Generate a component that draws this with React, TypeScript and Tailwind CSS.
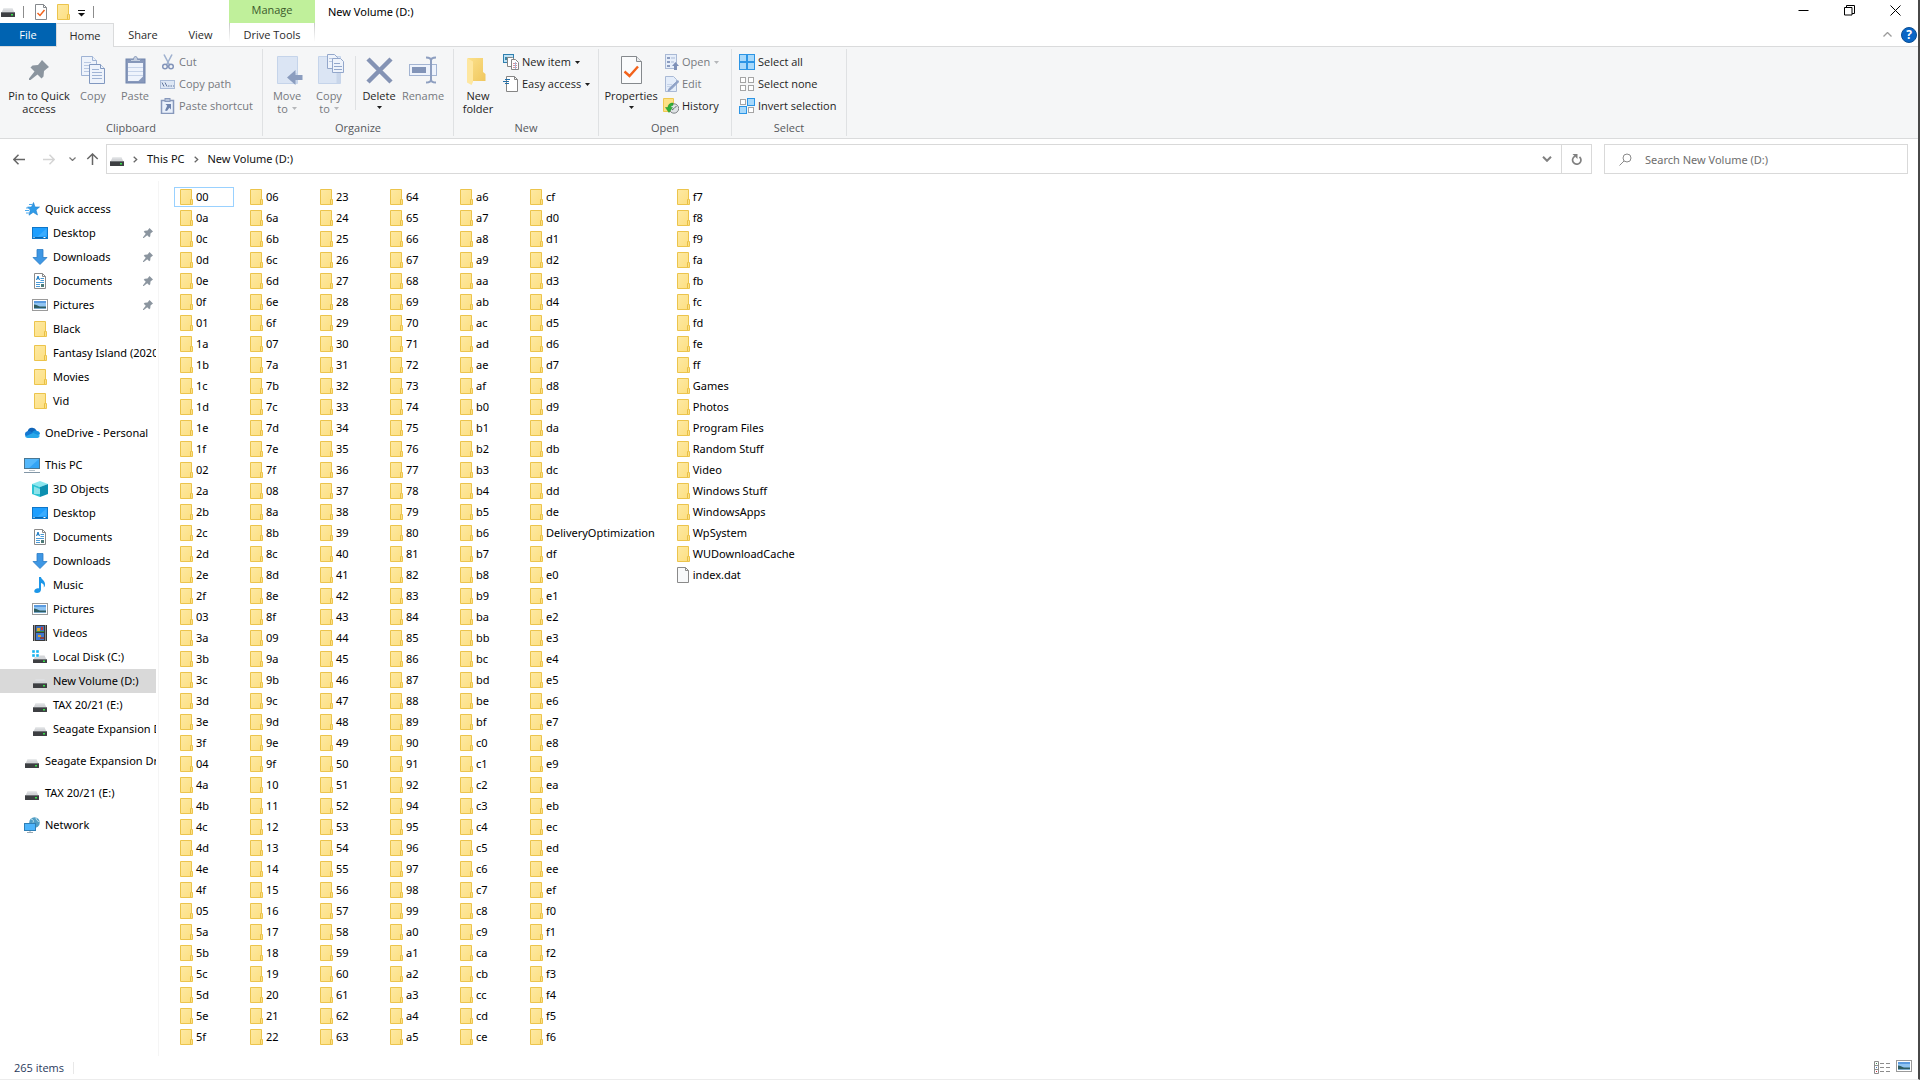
import type { ReactNode } from 'react';

type IconProps = { className?: string };

/* ---------- shared icons ---------- */

function Folder({ className = '' }: IconProps) {
  return (
    <svg className={`h-4 w-[13px] shrink-0 ${className}`} viewBox="0 0 13 16" aria-hidden="true">
      <defs>
        <linearGradient id="folderFill" x1="0" y1="0" x2="1" y2="1">
          <stop offset="0" stopColor="#fde9a3" />
          <stop offset="1" stopColor="#fddf80" />
        </linearGradient>
      </defs>
      <path d="M.5 .5h11v10h1v5H.5z" fill="url(#folderFill)" stroke="#ecc44c" />
      <path d="M10.500 15v-4.500h1" fill="none" stroke="#e8bf45" />
    </svg>
  );
}

function FileIcon() {
  return (
    <svg className="h-4 w-[13px] shrink-0" viewBox="0 0 13 16" aria-hidden="true">
      <path d="M.5 .5h8l3 3v12H.5z" fill="#f8f9fa" stroke="#8a8a8a" />
      <path d="M8.500 .5v3h3" fill="none" stroke="#8a8a8a" />
    </svg>
  );
}

function Drive({ className = '' }: IconProps) {
  return (
    <svg className={`h-4 w-4 shrink-0 ${className}`} viewBox="0 0 16 16" aria-hidden="true">
      <path d="M3.500 6.500h9l2 4h-13z" fill="#d3d5d8" />
      <path d="M3.500 6.500h9l.5 1h-10z" fill="#e6e7e9" />
      <rect x="1" y="10" width="14" height="5" rx=".6" fill="#3d3f42" />
      <rect x="1" y="10" width="14" height="1" fill="#6f7276" />
      <rect x="11" y="12" width="2" height="1.500" fill="#38e04a" />
    </svg>
  );
}

function SystemDrive() {
  return (
    <svg className="h-4 w-4 shrink-0" viewBox="0 0 16 16" aria-hidden="true">
      <path d="M3.500 6.500h9l2 4h-13z" fill="#d3d5d8" />
      <rect x="1" y="10" width="14" height="4" rx=".6" fill="#3d3f42" />
      <rect x="1" y="10" width="14" height="1" fill="#6f7276" />
      <rect x="11" y="11.500" width="2" height="1.500" fill="#38e04a" />
      <rect x="0" y="1" width="7" height="7" fill="#fff" />
      <path d="M0 1h3v3H0zM4 1h3v3H4zM0 5h3v3H0zM4 5h3v3H4z" fill="#18b4f1" stroke="#fff" strokeWidth=".4" />
    </svg>
  );
}

function Pin({ className = '', color = '#8b959f' }: IconProps & { color?: string }) {
  return (
    <svg className={className} viewBox="0 0 20 20" aria-hidden="true">
      <path
        d="M13 0 20 7 18 8.500 15 11 14.500 16.500 12.500 18.500 8.500 14.500 1.500 20 0 20 0 18.500 5.500 11.500 1.500 7.500 3.500 5.500 9 5 11.500 2z"
        fill={color}
      />
    </svg>
  );
}

function QuickStar() {
  return (
    <svg className="h-4 w-4 shrink-0" viewBox="0 0 16 16" aria-hidden="true">
      <path d="M9.500 1.500 11 6h4.500L12 9l1.500 5-4.300-2.700L5 14.200 6.300 9 3.500 6h4z" fill="#2f9be8" stroke="#1f7fcc" strokeWidth=".6" />
      <path d="M2 7h4M1 9.500h4M2 12h3M5 3.500h3" stroke="#4aaaf0" fill="none" />
    </svg>
  );
}

function DesktopIcon() {
  return (
    <svg className="h-4 w-4 shrink-0" viewBox="0 0 16 16" aria-hidden="true">
      <rect x=".5" y="2.500" width="15" height="11" fill="#1e9fff" stroke="#0f76c8" />
      <path d="M14.500 3.500v7L5 12z" fill="#3aacff" />
      <path d="M1 12.500h14" stroke="#0a66ad" />
      <path d="M1.500 12.500h1M11.500 12.500h2" stroke="#fff" />
    </svg>
  );
}

function DownloadIcon() {
  return (
    <svg className="h-4 w-4 shrink-0" viewBox="0 0 16 16" aria-hidden="true">
      <path d="M5 .5h6v8h4L8 15.500 1 8.500h4z" fill="#3e97e4" stroke="#2b7cc5" strokeWidth=".8" />
    </svg>
  );
}

function DocumentIcon() {
  return (
    <svg className="h-4 w-4 shrink-0" viewBox="0 0 16 16" aria-hidden="true">
      <path d="M2.500 .5h8l3 3v12h-11z" fill="#fff" stroke="#8a8a8a" />
      <path d="M10.500 .5v3h3" fill="none" stroke="#8a8a8a" />
      <path d="m4.500 7 1.500-4 1.500 4M5 5.700h2" fill="none" stroke="#1b7bc4" />
      <path d="M8.500 5.500H12M8.500 7.500H12M4 9.500h8M4 11.500h4M4 13.500h4" stroke="#4a9ad6" />
      <rect x="9" y="11" width="3" height="3" fill="#4c7a78" />
    </svg>
  );
}

function PictureIcon({ className = '' }: IconProps) {
  return (
    <svg className={`h-4 w-4 shrink-0 ${className}`} viewBox="0 0 16 16" aria-hidden="true">
      <rect x=".5" y="2.500" width="15" height="11" fill="#fff" stroke="#9a9a9a" />
      <rect x="2" y="4" width="12" height="8" fill="#8fc4f2" />
      <path d="M2 4h12v2H2z" fill="#5b9be0" />
      <path d="M2 7.500c2 0 4 1.500 6 2h6V12H2z" fill="#2f5d62" />
      <path d="M2 11h12v1H2z" fill="#7aa9c9" />
    </svg>
  );
}

function OneDriveIcon() {
  return (
    <svg className="h-4 w-4 shrink-0" viewBox="0 0 16 16" aria-hidden="true">
      <path d="M3.500 6.500a4.800 4.800 0 0 1 9-1L9 9z" fill="#0f64b8" />
      <path d="M3.300 6.200C5 5.800 6.500 6.200 8 7.200l3 4.800H3A3 3 0 0 1 3.300 6.200z" fill="#1477d1" />
      <path d="M8 7.500c1.500-2 3.500-2.500 5-1.500 2 .2 3 1.500 3 3.200l-4 1.800z" fill="#1490df" />
      <path d="M1 11.500 9 8l6.700 2.500A2.500 2.500 0 0 1 13.500 13h-10A3 3 0 0 1 1 11.500z" fill="#28a8ea" />
    </svg>
  );
}

function ThisPcIcon() {
  return (
    <svg className="h-4 w-4 shrink-0" viewBox="0 0 16 16" aria-hidden="true">
      <rect x=".5" y="1.500" width="15" height="10" fill="#55b8fb" stroke="#4a7793" />
      <path d="M15 2v9H5z" fill="#33a4f5" />
      <path d="M5 13.500h6" stroke="#b8c3cb" />
      <path d="M0 15.500h16" stroke="#8296a6" />
    </svg>
  );
}

function CubeIcon() {
  return (
    <svg className="h-4 w-4 shrink-0" viewBox="0 0 16 16" aria-hidden="true">
      <path d="M0 3 8 0l8 3-8 3z" fill="#8be7ef" />
      <path d="M0 3l8 3v10l-8-3z" fill="#2cc3d3" />
      <path d="M16 3 8 6v10l8-3z" fill="#0c8fb0" />
      <path d="M2 5.500 8 8v5l-6 0z" fill="#b4f0f3" opacity=".7" />
    </svg>
  );
}

function MusicIcon() {
  return (
    <svg className="h-4 w-4 shrink-0" viewBox="0 0 16 16" aria-hidden="true">
      <path d="M7 0h2c.3 2.500 4.500 3.500 4 8-.1 1-.6 2-1.200 2.500C12.300 7.500 11 6.500 9 6v6.500C9 15 7 16 5 16s-3-1-2.700-2.300C2.700 12 5 11 7 11.500z" fill="#1c96e8" />
    </svg>
  );
}

function VideoIcon() {
  return (
    <svg className="h-4 w-4 shrink-0" viewBox="0 0 16 16" aria-hidden="true">
      <rect x="1" y="0" width="14" height="16" fill="#3a3a3a" />
      <path d="M2.500 .5v15M13.500 .5v15" stroke="#e8e8e8" strokeDasharray="1 1" />
      <rect x="4" y="1" width="8" height="6" fill="#3c6fc0" />
      <rect x="4" y="8" width="8" height="7" fill="#3f78d0" />
      <path d="M5 3h3v3H5z" fill="#d8a531" />
      <path d="M9 2h2v3H9z" fill="#c9392f" />
      <path d="M4 6h8v1H4z" fill="#3d8b3d" />
      <path d="M6 10h3v2H6z" fill="#d8a531" />
      <path d="M8 12h4v2H8z" fill="#8a3f45" />
    </svg>
  );
}

function NetworkIcon() {
  return (
    <svg className="h-4 w-4 shrink-0" viewBox="0 0 16 16" aria-hidden="true">
      <circle cx="10.500" cy="5.500" r="5.300" fill="#4f9dc4" />
      <path d="M7 2c2 0 3 2 2 3.500M12 .8c0 2 1.500 3.500 3.500 4" stroke="#c1e2ee" fill="none" />
      <rect x=".5" y="6.500" width="11" height="7" fill="#4cb4fb" stroke="#2f7fb5" />
      <path d="M3 15.500h6M6 14v1" stroke="#9aa9b3" />
    </svg>
  );
}

function Caret({ className = '' }: IconProps) {
  return (
    <svg className={`inline-block h-[3px] w-[5px] shrink-0 ${className}`} viewBox="0 0 5 3" aria-hidden="true">
      <path d="M0 0h5L2.500 3z" fill="currentColor" />
    </svg>
  );
}

function PropertiesIcon({ className = '' }: IconProps) {
  return (
    <svg className={className} viewBox="0 0 21 28" aria-hidden="true">
      <path d="M.5 .5h15l5 5v22H.5z" fill="#fafbfc" stroke="#85898d" />
      <path d="M15.500 .5v5h5" fill="#e9ebed" stroke="#85898d" />
      <path d="m3.500 15.500 5 4.500L17 10.500" fill="none" stroke="#f2621b" strokeWidth="2.400" />
    </svg>
  );
}

function SmallPropertiesIcon() {
  return (
    <svg className="h-4 w-3" viewBox="0 0 12 16" aria-hidden="true">
      <path d="M.5 .5h8l3 3v12H.5z" fill="#fff" stroke="#85898d" />
      <path d="M8.500 .5v3h3" fill="none" stroke="#85898d" />
      <path d="m2.500 9 2.500 2.500 4.500-5.500" fill="none" stroke="#f2621b" strokeWidth="1.500" />
    </svg>
  );
}

/* ---------- ribbon icons ---------- */

function CopyIcon() {
  return (
    <svg className="size-8" viewBox="0 0 32 32" aria-hidden="true">
      <g fill="#eef3fb" stroke="#9fb3d4">
        <path d="M4.500 2.500h11l4 4v15h-15z" />
        <path d="M15.500 2.500v4h4" />
        <path d="M7 8.500h7M7 11.500h9M7 14.500h9M7 17.500h9" stroke="#b9c8e2" />
        <path d="M12.500 10.500h11l4 4v15h-15z" stroke="#8198c0" />
        <path d="M23.500 10.500v4h4" stroke="#8198c0" />
        <path d="M15 15.500h7M15 18.500h10M15 21.500h10M15 24.500h10" stroke="#9fb3d4" />
      </g>
    </svg>
  );
}

function PasteIcon() {
  return (
    <svg className="size-8" viewBox="0 0 32 32" aria-hidden="true">
      <rect x="7" y="5" width="19" height="24" fill="#8798bb" stroke="#7286ae" />
      <rect x="9" y="9" width="15" height="18" fill="#eef3fc" />
      <path d="M9 13.500h15M9 17.500h15M9 21.500h15" stroke="#c6d3e9" />
      <path d="M24 22.500v5h-5z" fill="#8798bb" />
      <path d="M11.500 7.500v-2h3c0-4 4-4 4 0h3v2z" fill="#c5cfe0" stroke="#8496b8" />
    </svg>
  );
}

function CutIcon() {
  return (
    <svg className="size-4" viewBox="0 0 16 16" aria-hidden="true">
      <path d="M4 .5 9.500 11M12 .5 6.500 11" stroke="#9fb1cf" strokeWidth="1.600" />
      <circle cx="5" cy="12.500" r="2.300" fill="none" stroke="#8294ba" strokeWidth="1.500" />
      <circle cx="11" cy="12.500" r="2.300" fill="none" stroke="#8294ba" strokeWidth="1.500" />
    </svg>
  );
}

function CopyPathIcon() {
  return (
    <svg className="size-4" viewBox="0 0 16 16" aria-hidden="true">
      <rect x=".5" y="4.500" width="14" height="8" fill="#dde7f5" stroke="#a9bbd8" />
      <path d="m2 6.500 2 4M5 6.500l2 4M8 10h1.500M10.500 10H12M13 10h1" stroke="#64789f" />
    </svg>
  );
}

function PasteShortcutIcon() {
  return (
    <svg className="size-4" viewBox="0 0 16 16" aria-hidden="true">
      <rect x="1.500" y="2.500" width="12" height="13" fill="#e9f0fb" stroke="#8798bb" strokeWidth="1.500" />
      <rect x="5" y=".5" width="5" height="3" fill="#b5c2d9" stroke="#8798bb" />
      <path d="M5.500 6h5.500v5.500L9.300 9.800 7 13 5 12.500 7.200 7.700z" fill="#6e83ac" />
    </svg>
  );
}

function MoveToIcon() {
  return (
    <svg className="size-8" viewBox="0 0 32 32" aria-hidden="true">
      <path d="M6.500 2.500h20v27h-20z" fill="#dbe5f4" stroke="#c5d4ea" />
      <path d="M23.500 29V19h3v10z" fill="#c9d6ea" />
      <path d="M24.500 16v5h7v5h-7v5L16 23.500z" fill="#8b9dbf" />
    </svg>
  );
}

function CopyToIcon() {
  return (
    <svg className="size-8" viewBox="0 0 32 32" aria-hidden="true">
      <path d="M5.500 2.500h22v27h-22z" fill="#dbe5f4" stroke="#c5d4ea" />
      <path d="M23.500 29V19h4v10z" fill="#c9d6ea" />
      <g fill="#eef3fb" stroke="#93a7cb">
        <path d="M14.500 .5h7l3 3v11h-10z" />
        <path d="M16 4.500h5M16 7.500h7" stroke="#b9c8e2" />
        <path d="M19.500 4.500h8l3 3v11h-11z" />
        <path d="M21 9.500h6M21 12.500h8M21 15.500h8" />
      </g>
    </svg>
  );
}

function DeleteIcon() {
  return (
    <svg className="size-8" viewBox="0 0 32 32" aria-hidden="true">
      <path d="m5 5 23 23M28 5 5 28" stroke="#8493b4" strokeWidth="4.500" />
    </svg>
  );
}

function RenameIcon() {
  return (
    <svg className="size-8" viewBox="0 0 32 32" aria-hidden="true">
      <rect x="2.500" y="10.500" width="27" height="11" fill="#eef3fc" stroke="#a3b4d2" />
      <rect x="5" y="13" width="14" height="6" fill="#8294b8" />
      <path d="M19 3.500c3 0 5 .5 5 3v19c0 2.500 2 3 5 3M29 3.500c-3 0-5 .5-5 3m0 19c0 2.500-2 3-5 3" fill="none" stroke="#8e9fc0" strokeWidth="2" />
    </svg>
  );
}

function NewFolderIcon() {
  return (
    <svg className="size-8" viewBox="0 0 32 32" aria-hidden="true">
      <defs>
        <linearGradient id="openFolder" x1="0" y1="0" x2="1" y2="1">
          <stop offset="0" stopColor="#fbe08a" />
          <stop offset="1" stopColor="#f0c75e" />
        </linearGradient>
      </defs>
      <path d="M6 4h15v14l2.500 2v7H8z" fill="url(#openFolder)" />
      <path d="m5 4 6 3.500V28l-1.500 3L5 28.500z" fill="#fee7a0" />
    </svg>
  );
}

function NewItemIcon() {
  return (
    <svg className="size-4" viewBox="0 0 16 16" aria-hidden="true">
      <rect x=".5" y=".5" width="10" height="8" fill="#bfe2f6" stroke="#2f7fae" />
      <rect x="2" y="3" width="5" height="3" fill="#3b86a8" />
      <path d="M4.500 3.500h5l2 2v7h-7z" fill="#fff" stroke="#858585" />
      <path d="M8.500 5.500h4l3 3v7h-7z" fill="#fff" stroke="#858585" />
      <path d="M10 9.500h4M10 11.500h4M10 13.500h4" stroke="#d7909b" />
      <path d="M12.500 8v7" stroke="#9fb8da" />
    </svg>
  );
}

function EasyAccessIcon() {
  return (
    <svg className="size-4" viewBox="0 0 16 16" aria-hidden="true">
      <path d="M3.500 .5h8l3 3v12h-11z" fill="#fff" stroke="#858585" />
      <path d="M11.500 .5v3h3" fill="none" stroke="#858585" />
      <path d="M2 3.500h5M0 5.500h6M2 7.500h4" stroke="#236fa8" strokeWidth="1.200" />
    </svg>
  );
}

function OpenIcon() {
  return (
    <svg className="size-4" viewBox="0 0 16 16" aria-hidden="true">
      <rect x="2.500" y=".5" width="11" height="14" fill="#e6eefa" stroke="#a9b9d5" />
      <path d="M4 3h3v2H4zM4 7h3v2H4zM4 11h3v2H4z" fill="#8c9dc0" />
      <path d="M8 4h4M8 8h3" stroke="#a9b9d5" />
      <path d="m12.500 8 3.500 4h-2v4h-3v-4H9z" fill="#7d90b7" />
    </svg>
  );
}

function EditIcon() {
  return (
    <svg className="size-4" viewBox="0 0 16 16" aria-hidden="true">
      <path d="M2.500 .5h8l3 3v12h-11z" fill="#e4edfa" stroke="#a9b9d5" />
      <path d="M4 8.500h5M4 10.500h3" stroke="#c6d3e9" />
      <path d="m15 4.500 1 1-8 8-3 1.500 1.500-3z" fill="#8fa2c6" stroke="#8fa2c6" />
    </svg>
  );
}

function HistoryIcon() {
  return (
    <svg className="size-4" viewBox="0 0 16 16" aria-hidden="true">
      <path d="M.5 .5h10v13H.5z" fill="#fde186" stroke="#efc94f" />
      <circle cx="11" cy="10.500" r="4.700" fill="#dfe3e6" stroke="#7c8084" />
      <path d="M11 10.500 13.500 8M11 10.500 9 12" fill="none" stroke="#5f6468" />
      <path d="M10 5C6.500 5 5 7 5 9.500H2.500L6 14.500l3.500-5H7.700C7.700 8.300 8.500 7.300 10 7.300z" fill="#30b137" stroke="#1d8f27" strokeWidth=".5" />
    </svg>
  );
}

function SelectCells({ on }: { on: [boolean, boolean, boolean, boolean] }) {
  const spots = [
    [0, 0],
    [8, 0],
    [0, 8],
    [8, 8],
  ];
  return (
    <svg className="size-4" viewBox="0 0 16 16" aria-hidden="true">
      {spots.map(([x, y], i) =>
        on[i] ? (
          <rect key={i} x={x + 0.5} y={y + 0.5} width="7" height="7" fill="#a8d9fb" stroke="#2c95e5" />
        ) : (
          <rect key={i} x={x + 1.5} y={y + 1.5} width="5" height="5" fill="#fff" stroke="#a5a5a5" />
        ),
      )}
    </svg>
  );
}

/* ---------- ribbon pieces ---------- */

type BigProps = { icon: ReactNode; className: string; disabled?: boolean; children: ReactNode };

function BigButton({ icon, className, disabled = false, children }: BigProps) {
  return (
    <button
      type="button"
      disabled={disabled}
      className={`flex shrink-0 flex-col items-center pt-[3px] text-center leading-[13px] whitespace-nowrap ${disabled ? 'text-[#76797e]' : 'text-[#1e1e1e]'} ${className}`}
    >
      <span className="mb-[3px] flex size-8 items-center justify-center">{icon}</span>
      {children}
    </button>
  );
}

type SmallProps = { icon: ReactNode; label: string; disabled?: boolean; caret?: boolean };

function SmallButton({ icon, label, disabled = false, caret = false }: SmallProps) {
  return (
    <button
      type="button"
      disabled={disabled}
      className={`flex h-[22px] items-center whitespace-nowrap ${disabled ? 'text-[#76797e]' : 'text-[#1e1e1e]'}`}
    >
      <span className="mr-[3px] shrink-0">{icon}</span>
      {label}
      {caret && <Caret className={disabled ? 'ml-1 text-[#b5b7ba]' : 'ml-1'} />}
    </button>
  );
}

type GroupProps = { title: string; className: string; rowClassName: string; children: ReactNode };

function Group({ title, className, rowClassName, children }: GroupProps) {
  return (
    <section aria-label={title} className={`my-[2px] flex shrink-0 flex-col border-r border-[#dfe1e3] pt-[2px] ${className}`}>
      <div className={`flex h-[70px] items-start ${rowClassName}`}>{children}</div>
      <div className="flex flex-1 items-center justify-center text-[#55585c]">{title}</div>
    </section>
  );
}

/* ---------- data ---------- */

type NavItem = { label: string; icon: ReactNode; level: 0 | 1; pinned?: boolean; selected?: boolean };

const navSections: NavItem[][] = [
  [
    { label: 'Quick access', icon: <QuickStar />, level: 0 },
    { label: 'Desktop', icon: <DesktopIcon />, level: 1, pinned: true },
    { label: 'Downloads', icon: <DownloadIcon />, level: 1, pinned: true },
    { label: 'Documents', icon: <DocumentIcon />, level: 1, pinned: true },
    { label: 'Pictures', icon: <PictureIcon />, level: 1, pinned: true },
    { label: 'Black', icon: <Folder />, level: 1 },
    { label: 'Fantasy Island (2020)', icon: <Folder />, level: 1 },
    { label: 'Movies', icon: <Folder />, level: 1 },
    { label: 'Vid', icon: <Folder />, level: 1 },
  ],
  [{ label: 'OneDrive - Personal', icon: <OneDriveIcon />, level: 0 }],
  [
    { label: 'This PC', icon: <ThisPcIcon />, level: 0 },
    { label: '3D Objects', icon: <CubeIcon />, level: 1 },
    { label: 'Desktop', icon: <DesktopIcon />, level: 1 },
    { label: 'Documents', icon: <DocumentIcon />, level: 1 },
    { label: 'Downloads', icon: <DownloadIcon />, level: 1 },
    { label: 'Music', icon: <MusicIcon />, level: 1 },
    { label: 'Pictures', icon: <PictureIcon />, level: 1 },
    { label: 'Videos', icon: <VideoIcon />, level: 1 },
    { label: 'Local Disk (C:)', icon: <SystemDrive />, level: 1 },
    { label: 'New Volume (D:)', icon: <Drive />, level: 1, selected: true },
    { label: 'TAX 20/21 (E:)', icon: <Drive />, level: 1 },
    { label: 'Seagate Expansion Drive (F:)', icon: <Drive />, level: 1 },
  ],
  [{ label: 'Seagate Expansion Drive (F:)', icon: <Drive />, level: 0 }],
  [{ label: 'TAX 20/21 (E:)', icon: <Drive />, level: 0 }],
  [{ label: 'Network', icon: <NetworkIcon />, level: 0 }],
];

const files = `00 0a 0c 0d 0e 0f 01 1a 1b 1c 1d 1e 1f 02 2a 2b 2c 2d 2e 2f 03 3a 3b 3c 3d 3e 3f 04 4a 4b 4c 4d 4e 4f 05 5a 5b 5c 5d 5e 5f
06 6a 6b 6c 6d 6e 6f 07 7a 7b 7c 7d 7e 7f 08 8a 8b 8c 8d 8e 8f 09 9a 9b 9c 9d 9e 9f 10 11 12 13 14 15 16 17 18 19 20 21 22
23 24 25 26 27 28 29 30 31 32 33 34 35 36 37 38 39 40 41 42 43 44 45 46 47 48 49 50 51 52 53 54 55 56 57 58 59 60 61 62 63
64 65 66 67 68 69 70 71 72 73 74 75 76 77 78 79 80 81 82 83 84 85 86 87 88 89 90 91 92 94 95 96 97 98 99 a0 a1 a2 a3 a4 a5
a6 a7 a8 a9 aa ab ac ad ae af b0 b1 b2 b3 b4 b5 b6 b7 b8 b9 ba bb bc bd be bf c0 c1 c2 c3 c4 c5 c6 c7 c8 c9 ca cb cc cd ce
cf d0 d1 d2 d3 d4 d5 d6 d7 d8 d9 da db dc dd de DeliveryOptimization df e0 e1 e2 e3 e4 e5 e6 e7 e8 e9 ea eb ec ed ee ef f0 f1 f2 f3 f4 f5 f6
f7 f8 f9 fa fb fc fd fe ff Games Photos`
  .split(/\s+/)
  .concat(['Program Files', 'Random Stuff', 'Video', 'Windows Stuff', 'WindowsApps', 'WpSystem', 'WUDownloadCache', 'index.dat']);

/* ---------- page ---------- */

function TitleBar() {
  return (
    <header className="flex h-[23px] shrink-0">
      <div className="flex w-[229px] shrink-0 items-center">
        <Drive className="mb-[3px]" />
        <span className="mr-[11px] ml-[7px] h-3 w-px bg-[#8c8c8c]" />
        <button type="button" aria-label="Properties">
          <SmallPropertiesIcon />
        </button>
        <button type="button" aria-label="New folder" className="ml-[10px]">
          <Folder />
        </button>
        <button type="button" aria-label="Customize Quick Access Toolbar" className="mt-1 ml-2">
          <svg className="h-[7px] w-[7px]" viewBox="0 0 7 7" aria-hidden="true">
            <path d="M0 .5h7" stroke="#111" />
            <path d="M0 3h7L3.500 6.500z" fill="#111" />
          </svg>
        </button>
        <span className="ml-2 h-3 w-px bg-[#8c8c8c]" />
      </div>
      <div className="flex w-[86px] shrink-0 items-center justify-center bg-[#c0f09b] pb-[3px] text-[#3b5a2b]">Manage</div>
      <h1 className="ml-[13px] flex-1 font-['Noto_Sans',sans-serif] leading-[23px] text-black">New Volume (D:)</h1>
      <div className="flex">
        <button type="button" aria-label="Minimize" className="flex h-[21px] w-[46px] items-center justify-center">
          <svg className="size-[11px]" viewBox="0 0 11 11" aria-hidden="true">
            <path d="M.5 5.500h10" stroke="#000" />
          </svg>
        </button>
        <button type="button" aria-label="Restore" className="flex h-[21px] w-[46px] items-center justify-center">
          <svg className="size-[11px]" viewBox="0 0 11 11" aria-hidden="true">
            <path d="M.5 2.500h7.500v7.500H.5zM2.500 2.500V.5h8v8H8" fill="none" stroke="#000" />
          </svg>
        </button>
        <button type="button" aria-label="Close" className="flex h-[21px] w-[46px] items-center justify-center">
          <svg className="size-[11px]" viewBox="0 0 11 11" aria-hidden="true">
            <path d="m.5 .5 10 10M10.500 .5l-10 10" stroke="#000" />
          </svg>
        </button>
      </div>
    </header>
  );
}

function Tabs() {
  return (
    <nav aria-label="Ribbon tabs" className="flex h-6 shrink-0 text-[#2b2b2b]">
      <button type="button" className="w-14 border-b border-[#dadbdc] bg-[#0063b1] text-white">
        File
      </button>
      <button type="button" className="w-[58px] border-x border-t border-[#dadbdc] bg-[#f5f6f7]">
        Home
      </button>
      <div className="flex flex-1 items-stretch border-b border-[#dadbdc]">
        <button type="button" className="w-[58px]">
          Share
        </button>
        <button type="button" className="w-[57px]">
          View
        </button>
        <span className="mb-1 w-px bg-linear-to-b from-[#c9cacb] to-white" />
        <button type="button" className="w-[84px]">
          Drive Tools
        </button>
        <span className="mb-1 w-px bg-linear-to-b from-[#c9cacb] to-white" />
        <div className="ml-auto flex items-center">
          <button type="button" aria-label="Minimize the Ribbon" className="mr-[9px]">
            <svg className="h-[5px] w-[9px]" viewBox="0 0 9 5" aria-hidden="true">
              <path d="m.5 4.500 4-4 4 4" fill="none" stroke="#9b9b9b" strokeWidth="1.300" />
            </svg>
          </button>
          <button type="button" aria-label="Help" className="mr-px flex size-4 items-center justify-center rounded-full border border-[#0b4f94] bg-[#0a66c6] text-xs leading-none font-bold text-white">
            ?
          </button>
        </div>
      </div>
    </nav>
  );
}

function Ribbon() {
  return (
    <div className="flex h-[92px] shrink-0 border-b border-[#dadbdc] bg-[#f5f6f7]">
      <Group title="Clipboard" className="w-[263px]" rowClassName="pl-[6px]">
        <BigButton className="w-[66px]" icon={<Pin className="size-5" />}>
          <span>Pin to Quick</span>
          <span>access</span>
        </BigButton>
        <BigButton className="w-[42px]" icon={<CopyIcon />} disabled>
          Copy
        </BigButton>
        <BigButton className="w-[42px]" icon={<PasteIcon />} disabled>
          Paste
        </BigButton>
        <div className="ml-1">
          <SmallButton icon={<CutIcon />} label="Cut" disabled />
          <SmallButton icon={<CopyPathIcon />} label="Copy path" disabled />
          <SmallButton icon={<PasteShortcutIcon />} label="Paste shortcut" disabled />
        </div>
      </Group>
      <Group title="Organize" className="w-[191px]" rowClassName="pl-[3px]">
        <BigButton className="w-[42px]" icon={<MoveToIcon />} disabled>
          <span>Move</span>
          <span className="flex items-center gap-1">
            to <Caret className="text-[#b5b7ba]" />
          </span>
        </BigButton>
        <BigButton className="w-[42px]" icon={<CopyToIcon />} disabled>
          <span>Copy</span>
          <span className="flex items-center gap-1">
            to <Caret className="text-[#b5b7ba]" />
          </span>
        </BigButton>
        <span className="mt-[5px] mr-[2px] ml-[5px] h-[54px] w-px bg-[#dfe1e3]" />
        <BigButton className="w-[42px]" icon={<DeleteIcon />}>
          <span>Delete</span>
          <Caret className="mt-1" />
        </BigButton>
        <BigButton className="w-[46px]" icon={<RenameIcon />} disabled>
          Rename
        </BigButton>
      </Group>
      <Group title="New" className="w-[145px]" rowClassName="pl-px">
        <BigButton className="w-[46px]" icon={<NewFolderIcon />}>
          <span>New</span>
          <span>folder</span>
        </BigButton>
        <div className="ml-[2px]">
          <SmallButton icon={<NewItemIcon />} label="New item" caret />
          <SmallButton icon={<EasyAccessIcon />} label="Easy access" caret />
        </div>
      </Group>
      <Group title="Open" className="w-[133px]" rowClassName="pl-1">
        <BigButton className="w-14" icon={<PropertiesIcon className="h-7 w-[21px]" />}>
          <span>Properties</span>
          <Caret className="mt-1" />
        </BigButton>
        <div className="ml-1">
          <SmallButton icon={<OpenIcon />} label="Open" disabled caret />
          <SmallButton icon={<EditIcon />} label="Edit" disabled />
          <SmallButton icon={<HistoryIcon />} label="History" />
        </div>
      </Group>
      <Group title="Select" className="w-[115px]" rowClassName="pl-[7px]">
        <div>
          <SmallButton icon={<SelectCells on={[true, true, true, true]} />} label="Select all" />
          <SmallButton icon={<SelectCells on={[false, false, false, false]} />} label="Select none" />
          <SmallButton icon={<SelectCells on={[false, true, true, false]} />} label="Invert selection" />
        </div>
      </Group>
    </div>
  );
}

function Chevron() {
  return (
    <svg className="h-[7px] w-[5px] shrink-0" viewBox="0 0 5 7" aria-hidden="true">
      <path d="m.7 .7 3 2.800-3 2.800" fill="none" stroke="#666" strokeWidth="1.300" />
    </svg>
  );
}

function AddressRow() {
  return (
    <div className="flex h-[41px] shrink-0 items-center pr-[10px] pb-px font-['Noto_Sans',sans-serif]">
      <button type="button" aria-label="Back" className="ml-[13px]">
        <svg className="h-[11px] w-3" viewBox="0 0 12 11" aria-hidden="true">
          <path d="M12 5.500H1M5.500 .8.800 5.500l4.700 4.700" fill="none" stroke="#666" strokeWidth="1.500" />
        </svg>
      </button>
      <button type="button" aria-label="Forward" className="ml-[18px]" disabled>
        <svg className="h-[11px] w-3" viewBox="0 0 12 11" aria-hidden="true">
          <path d="M0 5.500h11M6.500 .8l4.700 4.700-4.700 4.700" fill="none" stroke="#d4d4d4" strokeWidth="1.500" />
        </svg>
      </button>
      <button type="button" aria-label="Recent locations" className="ml-[14px]">
        <svg className="h-1 w-[7px]" viewBox="0 0 7 4" aria-hidden="true">
          <path d="m.5 .5 3 3 3-3" fill="none" stroke="#777" strokeWidth="1.200" />
        </svg>
      </button>
      <button type="button" aria-label="Up" className="ml-[10px]">
        <svg className="h-3 w-[13px]" viewBox="0 0 13 12" aria-hidden="true">
          <path d="M6.500 12V1M1.300 6 6.500 1l5.200 5" fill="none" stroke="#666" strokeWidth="1.500" />
        </svg>
      </button>
      <div className="ml-[7px] flex h-[30px] flex-1 items-stretch border border-[#d9d9d9]">
        <div className="flex flex-1 items-center text-[#111]">
          <Drive className="mr-2 ml-[2px]" />
          <Chevron />
          <a href="#this-pc" className="mr-[9px] ml-[9px]">
            This PC
          </a>
          <Chevron />
          <a href="#volume-d" className="ml-[9px]">
            New Volume (D:)
          </a>
          <button type="button" aria-label="Previous locations" className="mr-[9px] ml-auto">
            <svg className="h-[6px] w-[10px]" viewBox="0 0 10 6" aria-hidden="true">
              <path d="m1 .8 4 4 4-4" fill="none" stroke="#808080" strokeWidth="2" />
            </svg>
          </button>
        </div>
        <button type="button" aria-label="Refresh" className="flex w-[30px] items-center justify-center border-l border-[#d9d9d9]">
          <svg className="size-[11px]" viewBox="0 0 11 11" aria-hidden="true">
            <path d="M8.500 2.800A4.200 4.200 0 1 1 4 2.200" fill="none" stroke="#808080" strokeWidth="1.700" />
            <path d="M1.500 0h5v5z" fill="#808080" />
          </svg>
        </button>
      </div>
      <label className="ml-3 flex h-[30px] w-[304px] items-center border border-[#d9d9d9]">
        <svg className="mr-[13px] ml-[14px] size-[13px] shrink-0" viewBox="0 0 13 13" aria-hidden="true">
          <circle cx="8" cy="5" r="4" fill="none" stroke="#8a8a8a" />
          <path d="M5 8 .5 12.500" stroke="#8a8a8a" />
        </svg>
        <input
          type="text"
          aria-label="Search New Volume (D:)"
          placeholder="Search New Volume (D:)"
          className="h-6 w-full bg-transparent outline-none placeholder:text-[#6e6e6e]"
        />
      </label>
    </div>
  );
}

function Sidebar() {
  return (
    <aside className="w-[159px] shrink-0 border-r border-[#f5f5f5] pt-4 pr-[2px]">
      {navSections.map((section, s) => (
        <ul key={s} className="mb-2">
          {section.map((item, i) => (
            <li key={i} className={item.selected ? 'bg-[#d9d9d9]' : ''}>
              <a href="#nav" className={`flex h-6 items-center overflow-hidden whitespace-nowrap text-black ${item.level === 0 ? 'pl-6' : 'pl-8'}`}>
                <span className="mr-[5px] flex w-4 shrink-0 justify-center">{item.icon}</span>
                {item.label}
                {item.pinned && <Pin className="mr-[3px] ml-auto size-[10px] shrink-0" />}
              </a>
            </li>
          ))}
        </ul>
      ))}
    </aside>
  );
}

export default function App() {
  return (
    <div className="flex min-h-screen flex-col border-r-2 border-b border-r-[#484848] border-b-[#ececec] bg-white font-['Open_Sans',sans-serif] text-[11px] leading-4">
      <TitleBar />
      <Tabs />
      <Ribbon />
      <AddressRow />
      <div className="mt-px flex flex-1 font-['Noto_Sans',sans-serif]">
        <Sidebar />
        <main className="pt-[6px] pl-[15px]">
          <ul className="grid grid-flow-col grid-rows-[repeat(41,20px)] gap-x-[10px] gap-y-px">
            {files.map((name, i) => (
              <li key={name} className={`flex min-w-[60px] items-center gap-[3px] border px-[5px] whitespace-nowrap text-black ${i === 0 ? 'border-[#99d1ff]' : 'border-transparent'}`}>
                {name.endsWith('.dat') ? <FileIcon /> : <Folder />}
                {name}
              </li>
            ))}
          </ul>
        </main>
      </div>
      <footer className="flex h-[23px] shrink-0 items-center text-[#2a3a5c]">
        <span className="ml-[14px]">265 items</span>
        <span className="ml-[9px] h-3 w-px bg-[#e8e8e8]" />
        <button type="button" aria-label="Details view" className="ml-auto">
          <svg className="h-[13px] w-4" viewBox="0 0 16 13" aria-hidden="true">
            <path d="M.5 .5h4v12h-4zM.5 4.500h4M.5 8.500h4" fill="#fff" stroke="#8c8c8c" />
            <path d="M6 2.500h4M12 2.500h4M6 6.500h4M12 6.500h4M6 10.500h4M12 10.500h4" stroke="#8c8c8c" />
            <path d="M2 2.500h1" stroke="#3f8f56" />
            <path d="M2 6.500h1" stroke="#3c7fd0" />
            <path d="M2 10.500h1" stroke="#cf2b3c" />
          </svg>
        </button>
        <button type="button" aria-label="Large thumbnails" className="mr-[6px] mb-[3px] ml-[6px]">
          <PictureIcon />
        </button>
      </footer>
    </div>
  );
}
